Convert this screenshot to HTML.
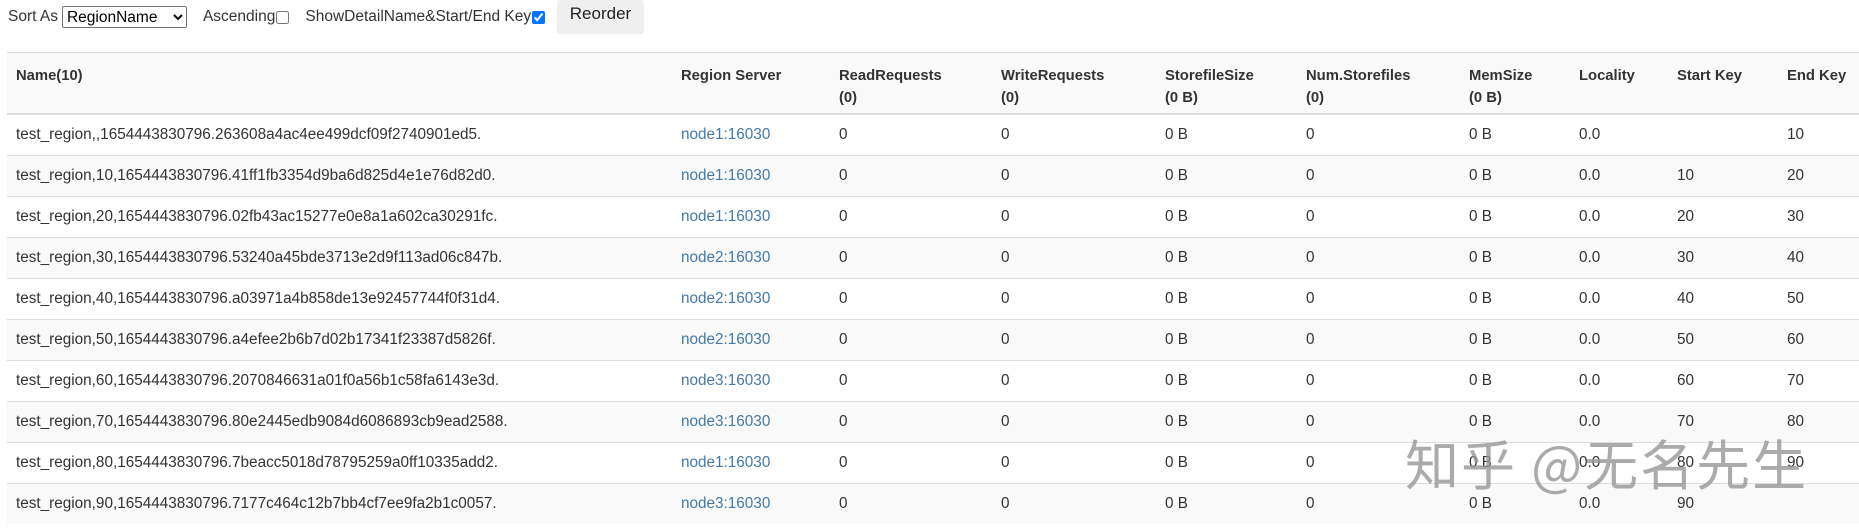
<!DOCTYPE html>
<html><head><meta charset="utf-8"><style>
body{margin:0;width:1859px;height:528px;overflow:hidden;background:#fff;font-family:"Liberation Sans",Arial,sans-serif;color:#333;position:relative}
.bar{position:absolute;left:8px;top:0;height:34px;font-size:15.5px;display:flex;align-items:center;white-space:nowrap}
select{font-family:"Liberation Sans",sans-serif;font-size:15.5px;height:22px;width:125px;margin:0 16px 0 4px;border:1px solid #767676;border-radius:2px;background:#fff;color:#000}
input{width:13px;height:13px;margin:0 16px 0 1px}
.btn{position:absolute;left:557px;top:0;width:87px;height:34px;background:#efefef;border-radius:3px;font-size:17px;color:#222;text-align:center;line-height:28px}
table{position:absolute;left:7px;top:52px;width:1852px;border-collapse:collapse;font-size:15.3px}
th,td{text-align:left;border-top:1px solid #ddd;padding:0 0 0 9px;vertical-align:middle}
th{height:61px;vertical-align:top;padding-top:12px;line-height:22px;font-weight:bold;font-size:14.8px;background:#f9f9f9;border-bottom:2px solid #ddd;box-sizing:border-box}
td{height:40px}
tbody tr:nth-child(even) td{background:#f9f9f9}
a{color:#4479a8;text-decoration:none}
.wm{position:absolute;left:1405px;top:422px;font-family:"Noto Sans CJK SC",sans-serif;font-size:54px;color:rgba(150,150,150,0.8);letter-spacing:2px;white-space:nowrap}
</style></head><body>
<div class="bar">Sort As<select><option>RegionName</option></select>Ascending<input type="checkbox">ShowDetailName&amp;Start/End Key<input type="checkbox" checked></div>
<div class="btn">Reorder</div>
<table>
<colgroup><col style="width:665px"><col style="width:158px"><col style="width:162px"><col style="width:164px"><col style="width:141px"><col style="width:163px"><col style="width:110px"><col style="width:98px"><col style="width:110px"><col></colgroup>
<thead><tr><th>Name(10)</th><th>Region Server</th><th>ReadRequests<br>(0)</th><th>WriteRequests<br>(0)</th><th>StorefileSize<br>(0 B)</th><th>Num.Storefiles<br>(0)</th><th>MemSize<br>(0 B)</th><th>Locality</th><th>Start Key</th><th>End Key</th></tr></thead>
<tbody>
<tr><td>test_region,,1654443830796.263608a4ac4ee499dcf09f2740901ed5.</td><td><a>node1:16030</a></td><td>0</td><td>0</td><td>0 B</td><td>0</td><td>0 B</td><td>0.0</td><td></td><td>10</td></tr>
<tr><td>test_region,10,1654443830796.41ff1fb3354d9ba6d825d4e1e76d82d0.</td><td><a>node1:16030</a></td><td>0</td><td>0</td><td>0 B</td><td>0</td><td>0 B</td><td>0.0</td><td>10</td><td>20</td></tr>
<tr><td>test_region,20,1654443830796.02fb43ac15277e0e8a1a602ca30291fc.</td><td><a>node1:16030</a></td><td>0</td><td>0</td><td>0 B</td><td>0</td><td>0 B</td><td>0.0</td><td>20</td><td>30</td></tr>
<tr><td>test_region,30,1654443830796.53240a45bde3713e2d9f113ad06c847b.</td><td><a>node2:16030</a></td><td>0</td><td>0</td><td>0 B</td><td>0</td><td>0 B</td><td>0.0</td><td>30</td><td>40</td></tr>
<tr><td>test_region,40,1654443830796.a03971a4b858de13e92457744f0f31d4.</td><td><a>node2:16030</a></td><td>0</td><td>0</td><td>0 B</td><td>0</td><td>0 B</td><td>0.0</td><td>40</td><td>50</td></tr>
<tr><td>test_region,50,1654443830796.a4efee2b6b7d02b17341f23387d5826f.</td><td><a>node2:16030</a></td><td>0</td><td>0</td><td>0 B</td><td>0</td><td>0 B</td><td>0.0</td><td>50</td><td>60</td></tr>
<tr><td>test_region,60,1654443830796.2070846631a01f0a56b1c58fa6143e3d.</td><td><a>node3:16030</a></td><td>0</td><td>0</td><td>0 B</td><td>0</td><td>0 B</td><td>0.0</td><td>60</td><td>70</td></tr>
<tr><td>test_region,70,1654443830796.80e2445edb9084d6086893cb9ead2588.</td><td><a>node3:16030</a></td><td>0</td><td>0</td><td>0 B</td><td>0</td><td>0 B</td><td>0.0</td><td>70</td><td>80</td></tr>
<tr><td>test_region,80,1654443830796.7beacc5018d78795259a0ff10335add2.</td><td><a>node1:16030</a></td><td>0</td><td>0</td><td>0 B</td><td>0</td><td>0 B</td><td>0.0</td><td>80</td><td>90</td></tr>
<tr><td>test_region,90,1654443830796.7177c464c12b7bb4cf7ee9fa2b1c0057.</td><td><a>node3:16030</a></td><td>0</td><td>0</td><td>0 B</td><td>0</td><td>0 B</td><td>0.0</td><td>90</td><td></td></tr>
</tbody></table>
<div class="wm">知乎 @无名先生</div>
</body></html>
